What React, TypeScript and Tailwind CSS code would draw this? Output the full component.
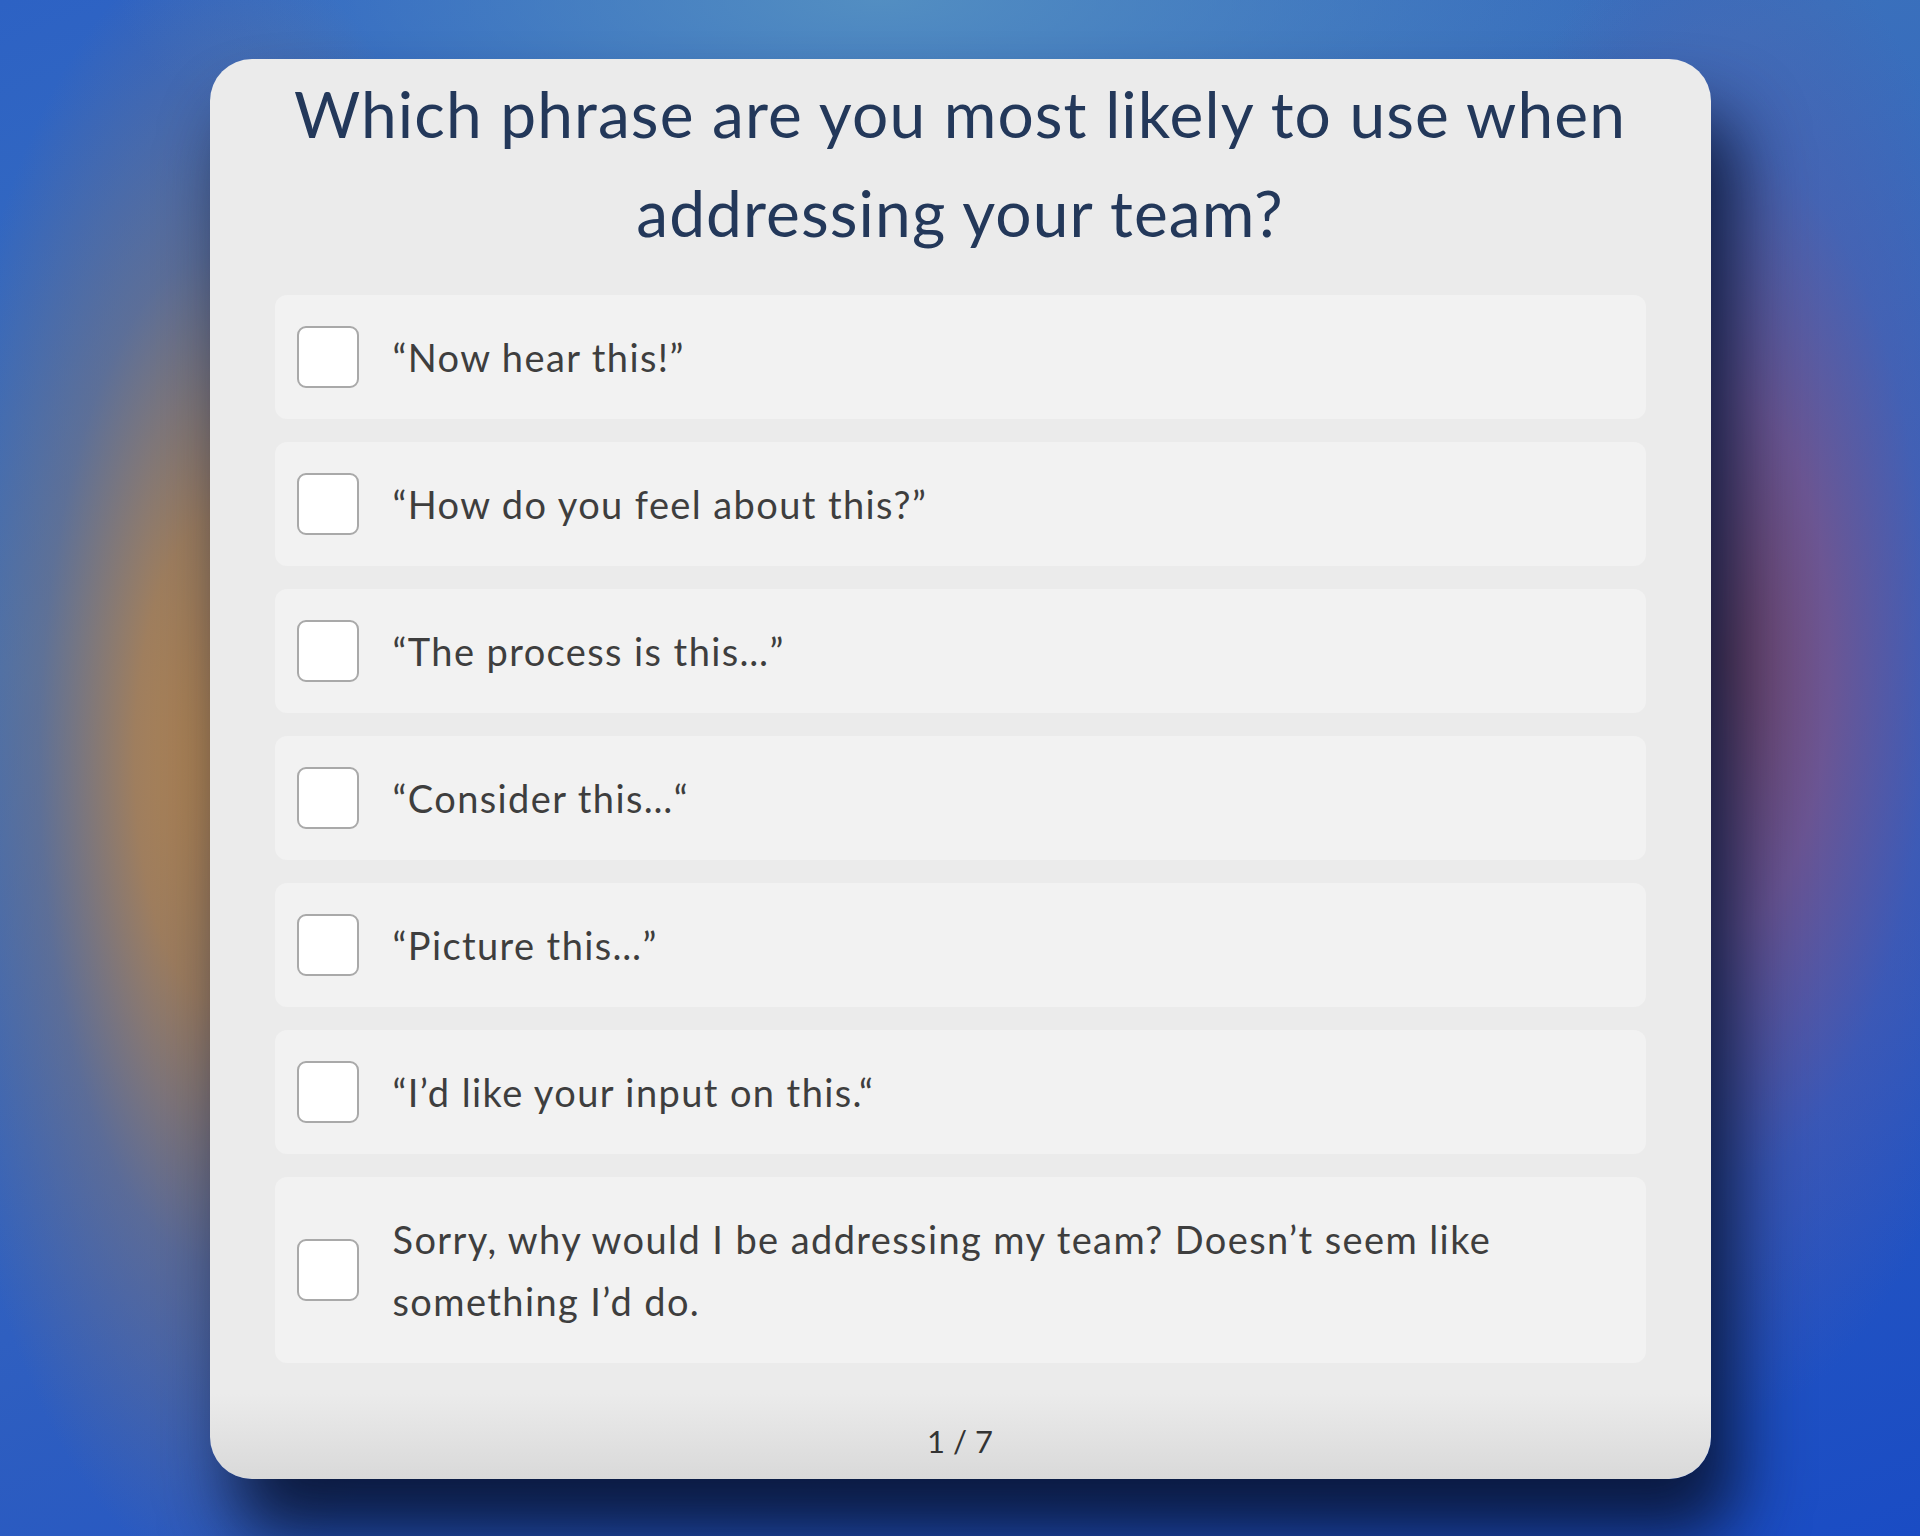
import React from 'react';

const options: string[] = [
  '“Now hear this!”',
  '“How do you feel about this?”',
  '“The process is this…”',
  '“Consider this…“',
  '“Picture this…”',
  '“I’d like your input on this.“',
  'Sorry, why would I be addressing my team? Doesn’t seem like something I’d do.',
];

const Option: React.FC<{ label: string }> = ({ label }) => (
  <label className="flex items-center rounded-[12px] bg-[#f2f2f2] py-[31px] pl-[22px] pr-[40px] cursor-pointer">
    <span className="shrink-0 w-[62px] h-[62px] rounded-[9px] border-2 border-[#a9a9a9] bg-white" />
    <span className="ml-[34px] text-[38px] leading-[62px] tracking-[1.4px] text-[#3e3e3e]">{label}</span>
  </label>
);

const App: React.FC = () => {
  return (
    <div className="w-full h-[1536px] overflow-hidden pt-[59px] font-['Lato',sans-serif] bg-[radial-gradient(ellipse_300px_820px_at_225px_760px,rgba(182,134,78,1)_0%,rgba(170,128,84,0.9)_30%,rgba(125,115,120,0.55)_62%,rgba(90,105,140,0)_100%),radial-gradient(ellipse_300px_760px_at_1725px_660px,rgba(118,70,104,1)_0%,rgba(118,84,140,0.85)_35%,rgba(90,90,165,0.4)_68%,rgba(90,90,165,0)_100%),radial-gradient(ellipse_760px_230px_at_880px_0px,rgba(86,146,194,0.9),rgba(86,146,194,0)),linear-gradient(160deg,#2d62c4_0%,#3a70bc_30%,#2f5fc0_60%,#1a4cc4_100%)]">
      <div className="flex justify-center">
        <div className="w-[1501px] rounded-[42px] bg-[linear-gradient(to_bottom,#ebebeb_0%,#ebebeb_94%,#d9d9d9_100%)] px-[65px] pt-[5px] pb-[18px] shadow-[24px_56px_70px_rgba(10,22,56,0.95)]">
          <h1 className="text-center text-[64px] leading-[99px] font-normal tracking-[1.1px] text-[#23385a]">
            Which phrase are you most likely to use when addressing your team?
          </h1>
          <div className="mt-[33px] flex flex-col gap-[23px]">
            {options.map((o) => (
              <Option key={o} label={o} />
            ))}
          </div>
          <div className="mt-[58px] text-center text-[31px] leading-[40px] text-[#333333]">1 / 7</div>
        </div>
      </div>
    </div>
  );
};

export default App;
